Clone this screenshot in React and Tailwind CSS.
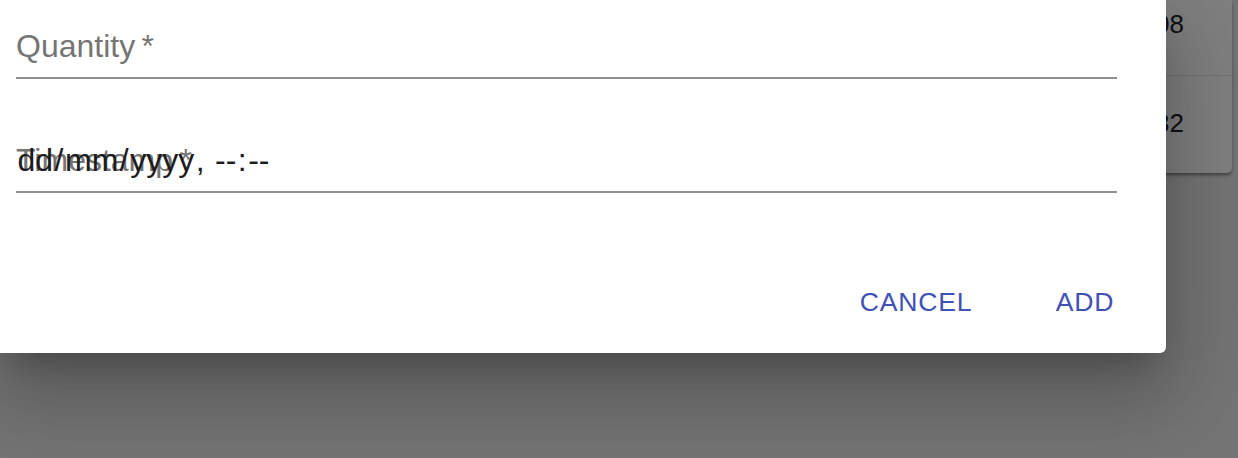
import React from "react";

const font = { fontFamily: '"Liberation Sans", Arial, sans-serif' };

const BackgroundTable = () => {
  return (
    <div className="flex justify-end pr-[6px] h-full">
      <div className="w-[640px] h-[173px] bg-white rounded-b-[5px] shadow-[0_3px_3px_-1px_rgba(0,0,0,0.3),0_2px_4px_rgba(0,0,0,0.2)]">
        <div className="h-[76px] border-b border-[#e0e0e0] pt-[11px] pr-[48px] text-right text-[26px] leading-[26px] text-[#222]">
          08
        </div>
        <div className="h-[97px] pt-[34px] pr-[48px] text-right text-[26px] leading-[26px] text-[#222]">
          32
        </div>
      </div>
    </div>
  );
};

const Field = ({ label, className, children }) => (
  <div className={className}>
    <div className="grid">
      <span className="col-start-1 row-start-1 text-[32px] leading-[32px] text-[#757575]">
        {label}
      </span>
      {children}
    </div>
  </div>
);

export default function App() {
  return (
    <div className="relative w-[1238px] h-[458px] overflow-hidden bg-[#e8e8e8]" style={font}>
      <BackgroundTable />
      <div className="absolute inset-0 bg-black/50" />

      <div className="absolute left-0 top-0 w-[1166px] h-[353px] bg-white rounded-br-[6px] shadow-[0_21px_28px_-13px_rgba(0,0,0,0.2),0_46px_72px_6px_rgba(0,0,0,0.14),0_17px_87px_15px_rgba(0,0,0,0.12)]">
        <div className="flex flex-col pl-[16px] pr-[49px]">
          <Field
            label={"Quantity\u2009*"}
            className="pt-[30px] pb-[15px] border-b-2 border-[#8f8f8f]"
          />
          <Field
            label={"Timestamp\u2009*"}
            className="mt-[65px] pb-[15px] border-b-2 border-[#8f8f8f]"
          >
            <span className="col-start-1 row-start-1 flex text-[32px] leading-[32px] text-[#1c1c1c]">
              <span className="px-[1.5px]">dd</span>
              <span>/</span>
              <span className="px-[1.5px]">mm</span>
              <span>/</span>
              <span className="px-[1.5px]">yyyy</span>
              <span className="whitespace-pre">, </span>
              <span className="px-[1.5px]">--</span>
              <span>:</span>
              <span className="px-[1.5px]">--</span>
            </span>
          </Field>
        </div>

        <div className="flex justify-end gap-[37px] pr-[20px] mt-[96px]">
          <button className="w-[142px] text-center text-[26.6px] leading-[27px] font-medium tracking-[0.76px] text-[#3f51b5]">
            CANCEL
          </button>
          <button className="w-[122px] text-center text-[26.6px] leading-[27px] font-medium tracking-[0.76px] text-[#3f51b5]">
            ADD
          </button>
        </div>
      </div>
    </div>
  );
}
